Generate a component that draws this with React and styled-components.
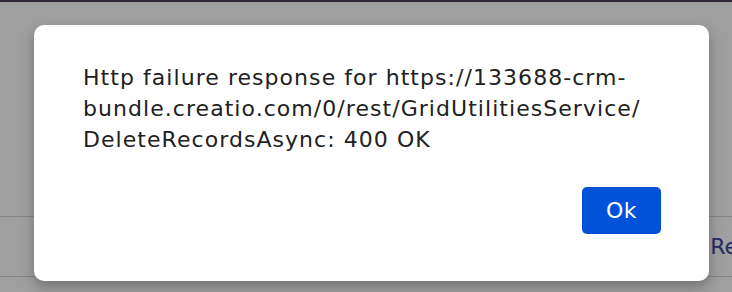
import React from 'react';
import styled, { createGlobalStyle } from 'styled-components';

const GlobalStyle = createGlobalStyle`
    html, body {
        margin: 0;
        padding: 0;
        width: 732px;
        height: 292px;
        overflow: hidden;
        background: #f4f4f6;
        font-family: "DejaVu Sans", "Liberation Sans", sans-serif;
    }
`;

const Page = styled.div`
    position: relative;
    width: 732px;
    height: 292px;
    overflow: hidden;
    border-top: 2px solid #2f2636;
    box-sizing: border-box;
`;

const ListBox = styled.div`
    padding-top: 214px;
`;

const ListRow = styled.div`
    height: 59px;
    border-top: 1px solid #c9c9cf;
    display: flex;
    align-items: center;
    justify-content: flex-end;
    margin-right: -6px;
    color: #1d2f8f;
    font-size: 22px;
    white-space: nowrap;
`;

const Overlay = styled.div`
    position: absolute;
    inset: 0;
    background: rgba(40, 40, 40, 0.42);
`;

const Dialog = styled.div`
    position: absolute;
    left: 34px;
    top: 23px;
    width: 675px;
    height: 256px;
    box-sizing: border-box;
    background: #fff;
    border-radius: 10px;
    box-shadow: 0 6px 14px rgba(0, 0, 0, 0.28);
    padding: 37px 48px 0 49px;
    display: flex;
    flex-direction: column;
`;

const Message = styled.div`
    color: #212121;
    font-size: 22px;
    line-height: 31px;
    letter-spacing: 1.05px;
    white-space: nowrap;
`;

const Footer = styled.div`
    display: flex;
    justify-content: flex-end;
    margin-top: 32px;
`;

const OkButton = styled.button`
    width: 79px;
    height: 47px;
    border: none;
    border-radius: 5px;
    background: #0152d9;
    color: #fff;
    font-family: inherit;
    font-size: 22px;
    letter-spacing: 0.5px;
    cursor: pointer;
`;

export default function App() {
    return (
        <>
            <GlobalStyle />
            <Page>
                <ListBox>
                    <ListRow>Filter Re</ListRow>
                    <ListRow />
                </ListBox>
                <Overlay />
                <Dialog>
                    <Message>
                        Http failure response for https://133688-crm-<br />
                        bundle.creatio.com/0/rest/GridUtilitiesService/<br />
                        DeleteRecordsAsync: 400 OK
                    </Message>
                    <Footer>
                        <OkButton>Ok</OkButton>
                    </Footer>
                </Dialog>
            </Page>
        </>
    );
}
